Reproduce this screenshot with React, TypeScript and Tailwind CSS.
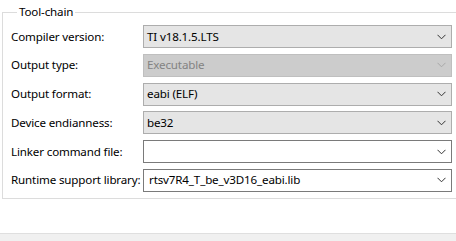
import React from 'react';

type Row = {
  label: string;
  value: string;
  kind: 'select' | 'disabled' | 'edit';
};

const rows: Row[] = [
  { label: 'Compiler version:', value: 'TI v18.1.5.LTS', kind: 'select' },
  { label: 'Output type:', value: 'Executable', kind: 'disabled' },
  { label: 'Output format:', value: 'eabi (ELF)', kind: 'select' },
  { label: 'Device endianness:', value: 'be32', kind: 'select' },
  { label: 'Linker command file:', value: '', kind: 'edit' },
  { label: 'Runtime support library:', value: 'rtsv7R4_T_be_v3D16_eabi.lib', kind: 'edit' },
];

const Chevron = ({ color }: { color: string }) => (
  <svg width="9" height="6" viewBox="0 0 9 6" className="shrink-0">
    <path d="M0.5 0.8 L4.5 4.8 L8.5 0.8" fill="none" stroke={color} strokeWidth="1" />
  </svg>
);

const Combo = ({ row }: { row: Row }) => {
  const box =
    row.kind === 'select'
      ? 'bg-[#e5e5e5] border-[#adadad] text-black pl-[3px]'
      : row.kind === 'disabled'
        ? 'bg-[#cccccc] border-[#bfbfbf] text-[#838383] pl-[3px]'
        : 'bg-white border-[#7a7a7a] text-black pl-[5px]';
  return (
    <div className={`flex h-[23px] w-[309px] items-center justify-between border pr-[5px] ${box}`}>
      <span className="whitespace-nowrap leading-[16px]">{row.value}</span>
      <Chevron color={row.kind === 'disabled' ? '#a8a8a8' : '#333333'} />
    </div>
  );
};

export default function App() {
  return (
    <div className="flex h-[241px] w-[456px] flex-col overflow-hidden bg-white text-[11.6px] tracking-[-0.15px] text-black [font-family:'Noto_Sans',sans-serif]">
      <fieldset className="ml-[2px] mt-[4px] w-[470px] border border-[#dcdcdc] pb-[6px] pl-[8px]">
        <legend className="ml-[6px] px-[2px] leading-[16px]">Tool-chain</legend>
        <div className="mt-[5px] flex flex-col gap-[5.8px]">
          {rows.map((row) => (
            <div key={row.label} className="flex items-center">
              <div className="w-[132px] shrink-0 whitespace-nowrap leading-[16px]">{row.label}</div>
              <Combo row={row} />
            </div>
          ))}
        </div>
      </fieldset>
      <div className="flex-1" />
      <div className="h-[8px] border-t border-[#dfdfdf] bg-[#f0f0f0]" />
    </div>
  );
}
